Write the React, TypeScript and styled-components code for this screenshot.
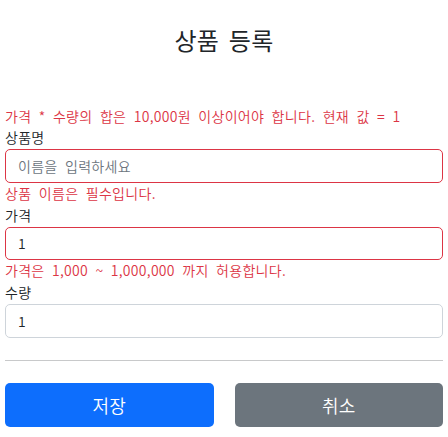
import styled, { createGlobalStyle } from "styled-components";

const GlobalStyle = createGlobalStyle`
  * {
    box-sizing: border-box;
  }

  body {
    margin: 0;
    background: #fff;
    color: #212529;
    font-family: "Noto Sans CJK KR", "Noto Sans", sans-serif;
    font-size: 14px;
    font-weight: 350;
    word-spacing: 4px;
    letter-spacing: 0.3px;
  }
`;

const Page = styled.div`
  padding: 0 5px;
`;

const Title = styled.h2`
  margin: 0;
  padding: 26px 0 52px;
  text-align: center;
  font-size: 24px;
  font-weight: 400;
  line-height: 28px;
`;

const Form = styled.form`
  display: flex;
  flex-direction: column;
`;

const ErrorText = styled.div`
  color: #dc3545;
  font-size: 14px;
  line-height: 21px;
`;

const Label = styled.label`
  display: block;
  font-size: 14px;
  line-height: 21px;
  margin-bottom: 1px;
`;

const Input = styled.input<{ $invalid?: boolean }>`
  display: block;
  width: 100%;
  height: 33.5px;
  padding: 0 12px;
  font-family: inherit;
  font-size: 14px;
  font-weight: inherit;
  word-spacing: inherit;
  letter-spacing: inherit;
  color: #212529;
  border: 1px solid ${(p) => (p.$invalid ? "#dc3545" : "#ced4da")};
  border-radius: 5px;
  outline: none;

  &::placeholder {
    color: #6c757d;
  }
`;

const Field = styled.div`
  display: flex;
  flex-direction: column;

  & + & {
    margin-top: 1px;
  }
`;

const Divider = styled.hr`
  margin: 22px 0;
  border: 0;
  border-top: 1px solid #c8c9ca;
`;

const Actions = styled.div`
  display: grid;
  grid-template-columns: 1fr 1fr;
  gap: 21px;
`;

const Button = styled.button<{ $variant: "primary" | "secondary" }>`
  height: 44px;
  border: 0;
  border-radius: 5px;
  font-family: inherit;
  font-size: 18px;
  font-weight: inherit;
  letter-spacing: inherit;
  color: #fff;
  background: ${(p) => (p.$variant === "primary" ? "#0d6efd" : "#6c757d")};
`;

export default function App() {
  return (
    <>
      <GlobalStyle />
      <Page>
        <Title>상품 등록</Title>
        <Form onSubmit={(e) => e.preventDefault()}>
          <ErrorText>가격 * 수량의 합은 10,000원 이상이어야 합니다. 현재 값 = 1</ErrorText>
          <Field>
            <Label>상품명</Label>
            <Input $invalid placeholder="이름을 입력하세요" />
            <ErrorText>상품 이름은 필수입니다.</ErrorText>
          </Field>
          <Field>
            <Label>가격</Label>
            <Input $invalid defaultValue="1" />
            <ErrorText>가격은 1,000 ~ 1,000,000 까지 허용합니다.</ErrorText>
          </Field>
          <Field>
            <Label>수량</Label>
            <Input defaultValue="1" />
          </Field>
          <Divider />
          <Actions>
            <Button type="submit" $variant="primary">저장</Button>
            <Button type="button" $variant="secondary">취소</Button>
          </Actions>
        </Form>
      </Page>
    </>
  );
}
